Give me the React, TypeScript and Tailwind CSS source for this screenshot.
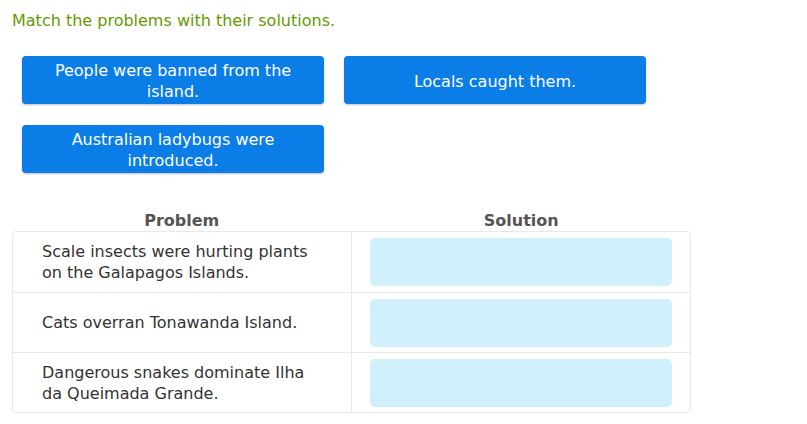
const tiles = [
  'People were banned from the island.',
  'Locals caught them.',
  'Australian ladybugs were introduced.',
];

const problems = [
  'Scale insects were hurting plants on the Galapagos Islands.',
  'Cats overran Tonawanda Island.',
  'Dangerous snakes dominate Ilha da Queimada Grande.',
];

const App = () => {
  return (
    <div className="min-h-screen w-[807px] bg-white font-[DejaVu_Sans,Verdana,sans-serif] text-[16px]">
      <div className="px-3 pt-[10px]">
        <p className="text-[#659a00] leading-[21px]">Match the problems with their solutions.</p>

        {/* Answer tiles */}
        <div className="mt-[25px] ml-[10px] grid grid-cols-[302px_302px] gap-x-5 gap-y-[21px]">
          {tiles.map((t) => (
            <div
              key={t}
              className="h-12 rounded-[4px] bg-[#0b7de6] shadow-[0_1px_2px_rgba(0,0,0,0.25)] text-white leading-[21px] text-center flex items-center justify-center px-6 pt-[2px]"
            >
              {t}
            </div>
          ))}
        </div>

        {/* Table */}
        <div className="mt-[37px] w-[679px]">
          <div className="grid grid-cols-2 font-bold text-[#555555] leading-[20px] pt-[1px]">
            <div className="text-center">Problem</div>
            <div className="text-center">Solution</div>
          </div>
          <div className="border border-[#e8e8e8] rounded-[4px]">
            {problems.map((p, i) => (
              <div
                key={p}
                className={`grid grid-cols-2 h-[60px] ${i > 0 ? 'border-t border-[#e8e8e8]' : ''}`}
              >
                <div className="flex items-center pl-[29px] pr-[30px] text-[#333333] leading-[21px] border-r border-[#e8e8e8]">
                  {p}
                </div>
                <div className="flex items-center pl-[18px]">
                  <div className="w-[302px] h-12 rounded-[5px] bg-[#d0f0fc]" />
                </div>
              </div>
            ))}
          </div>
        </div>
      </div>
    </div>
  );
};

export default App;
